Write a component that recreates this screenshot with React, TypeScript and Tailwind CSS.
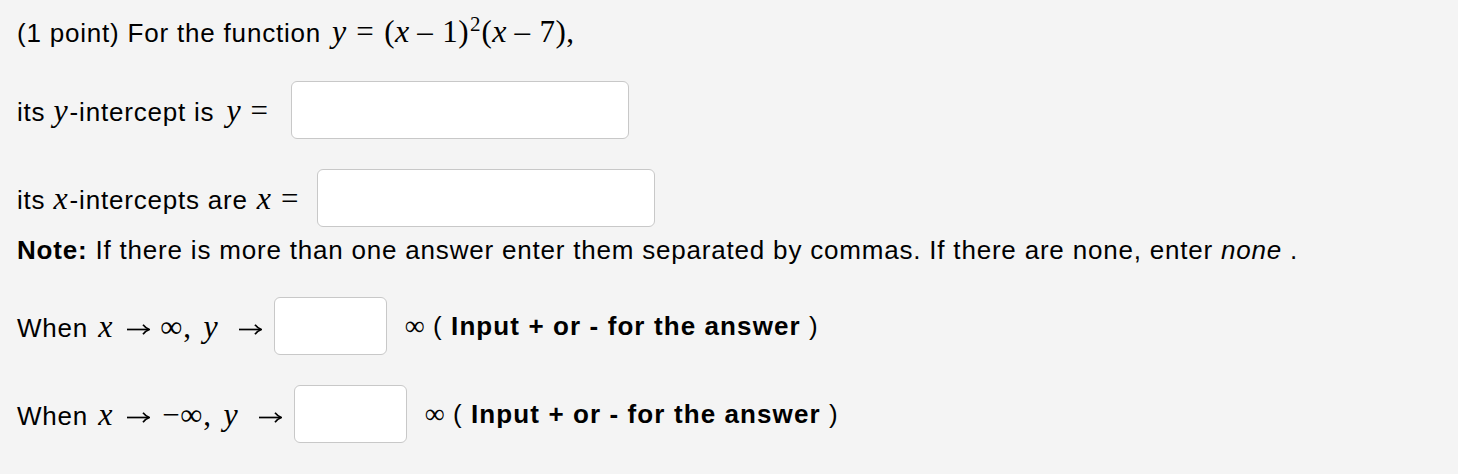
import React from "react";

const sans = "font-['Liberation_Sans',Arial,Helvetica,sans-serif]";
const serif = "font-['Liberation_Serif','Times_New_Roman',serif]";

function M({ children, cls = "" }: { children: React.ReactNode; cls?: string }) {
  return <span className={`${serif} text-[31px] tracking-[0.5px] ${cls}`}>{children}</span>;
}
function V({ children, cls = "" }: { children: React.ReactNode; cls?: string }) {
  return <span className={`${serif} italic text-[32px] tracking-[2px] ${cls}`}>{children}</span>;
}
function Arrow({ cls = "" }: { cls?: string }) {
  return (
    <svg width="24" height="14" viewBox="0 0 24 14" className={`inline-block align-[1px] ${cls}`}>
      <path d="M1 7.5H22.5" stroke="black" strokeWidth="1.7" fill="none" />
      <path d="M17 2.8Q19.5 6 23.3 7.5Q19.5 9 17 12.2" stroke="black" strokeWidth="1.7" fill="none" />
    </svg>
  );
}
function Inf({ cls = "" }: { cls?: string }) {
  return <span className={`${serif} ${cls}`}>∞</span>;
}
function Box({ w }: { w: string }) {
  return <div className={`${w} h-[58px] shrink-0 rounded-[6px] border border-[#c8c8c8] bg-white`} />;
}

export default function App() {
  return (
    <div
      className={`${sans} w-[1458px] h-[474px] bg-[#f4f4f4] text-[26px] tracking-[0.8px] text-black pl-[17px] overflow-hidden`}
    >
      <div className="h-[64px] flex items-center">
        <span className="whitespace-nowrap leading-none -mt-[3px]">
          <span>(1 point) For the function</span>
          <V cls="ml-[11px]">y</V>
          <M cls="ml-[8px]">=</M>
          <M cls="ml-[10px]">(</M>
          <V>x</V>
          <M cls="ml-[6px]">–</M>
          <M cls="ml-[9px]">1)</M>
          <sup className={`${serif} text-[21px] ml-[1px]`}>2</sup>
          <M>(</M>
          <V>x</V>
          <M cls="ml-[6px]">–</M>
          <M cls="ml-[9px]">7),</M>
        </span>
      </div>
      <div className="mt-[17px] h-[58px] flex items-center">
        <span className="whitespace-nowrap leading-none">
          <span>its</span>
          <V cls="ml-[8px]">y</V>
          <span>-intercept is</span>
          <V cls="ml-[12px]">y</V>
          <M cls="ml-[8px]">=</M>
        </span>
        <div className="ml-[22px]">
          <Box w="w-[338px]" />
        </div>
      </div>
      <div className="mt-[30px] h-[58px] flex items-center">
        <span className="whitespace-nowrap leading-none">
          <span>its</span>
          <V cls="ml-[8px]">x</V>
          <span>-intercepts are</span>
          <V cls="ml-[9px]">x</V>
          <M cls="ml-[8px]">=</M>
        </span>
        <div className="ml-[18px]">
          <Box w="w-[338px]" />
        </div>
      </div>
      <div className="mt-[8px] h-[30px] flex items-center whitespace-pre">
        <span className="font-bold">Note:</span>
        <span> If there is more than one answer enter them separated by commas. If there are none, enter </span>
        <span className="italic">none</span>
        <span> .</span>
      </div>
      <div className="mt-[32px] h-[58px] flex items-center">
        <span className="whitespace-nowrap leading-none">
          <span>When</span>
          <V cls="ml-[10px]">x</V>
          <Arrow cls="ml-[12px]" />
          <Inf cls="ml-[10px] text-[31px]" />
          <M>,</M>
          <V cls="ml-[12px]">y</V>
          <Arrow cls="ml-[18px]" />
        </span>
        <div className="ml-[12px]">
          <Box w="w-[113px]" />
        </div>
        <span className="ml-[18px] whitespace-pre leading-none tracking-[1.1px]">
          <Inf cls="text-[28px] tracking-normal" /> ( <b>Input + or - for the answer</b> )
        </span>
      </div>
      <div className="mt-[30px] h-[58px] flex items-center">
        <span className="whitespace-nowrap leading-none">
          <span>When</span>
          <V cls="ml-[10px]">x</V>
          <Arrow cls="ml-[12px]" />
          <M cls="ml-[12px]">−</M>
          <Inf cls="text-[31px]" />
          <M>,</M>
          <V cls="ml-[12px]">y</V>
          <Arrow cls="ml-[18px]" />
        </span>
        <div className="ml-[12px]">
          <Box w="w-[113px]" />
        </div>
        <span className="ml-[18px] whitespace-pre leading-none tracking-[1.1px]">
          <Inf cls="text-[28px] tracking-normal" /> ( <b>Input + or - for the answer</b> )
        </span>
      </div>
    </div>
  );
}
